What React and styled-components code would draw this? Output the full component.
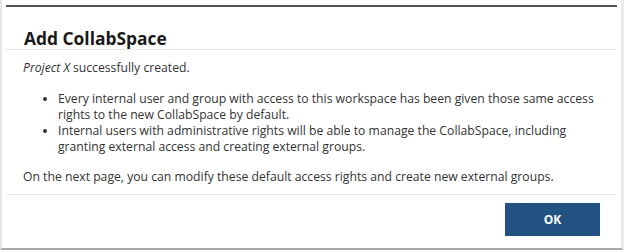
import styled, { createGlobalStyle } from "styled-components";

const Global = createGlobalStyle`
  html, body {
    margin: 0;
    padding: 0;
    background: #fff;
  }
  body {
    font-family: "Open Sans", "Liberation Sans", sans-serif;
    color: #333;
  }
`;

const Frame = styled.div`
  box-sizing: border-box;
  width: 624px;
  height: 250px;
  padding-top: 5px;
  border-left: 2px solid #e6e6e6;
  border-right: 3px solid #ebebeb;
  border-bottom: 2px solid #a8a8a8;
  background: #fff;
`;

const Dialog = styled.div`
  margin: 0 4px;
  border-top: 2px solid #555;
`;

const Header = styled.div`
  display: flex;
  align-items: flex-end;
  height: 42px;
  padding: 0 18px;
  border-bottom: 1px solid #e8e8e8;
`;

const Title = styled.h2`
  margin: 0 0 2px;
  font-size: 17.4px;
  line-height: 17.4px;
  font-weight: 700;
  color: #1a1a1a;
`;

const Body = styled.div`
  padding: 10px 17px 9px;
  font-size: 12.2px;
  line-height: 16px;
  border-bottom: 1px solid #e8e8e8;
`;

const Para = styled.p`
  margin: 0;
`;

const List = styled.ul`
  margin: 15px 0 14px;
  padding-left: 35px;
`;

const Item = styled.li`
  margin: 0;
`;

const Footer = styled.div`
  display: flex;
  justify-content: flex-end;
  padding: 8px 17px;
`;

const Button = styled.button`
  width: 95px;
  height: 33px;
  border: none;
  background: #215282;
  color: #fff;
  font-family: "Open Sans", "Liberation Sans", sans-serif;
  font-weight: 700;
  font-size: 12px;
  cursor: pointer;
`;

export default function App() {
  return (
    <>
      <Global />
      <Frame>
        <Dialog>
          <Header>
            <Title>Add CollabSpace</Title>
          </Header>
          <Body>
            <Para>
              <em>Project X</em> successfully created.
            </Para>
            <List>
              <Item>
                Every internal user and group with access to this workspace has been given those same access
                rights to the new CollabSpace by default.
              </Item>
              <Item>
                Internal users with administrative rights will be able to manage the CollabSpace, including
                granting external access and creating external groups.
              </Item>
            </List>
            <Para>
              On the next page, you can modify these default access rights and create new external groups.
            </Para>
          </Body>
          <Footer>
            <Button>OK</Button>
          </Footer>
        </Dialog>
      </Frame>
    </>
  );
}
